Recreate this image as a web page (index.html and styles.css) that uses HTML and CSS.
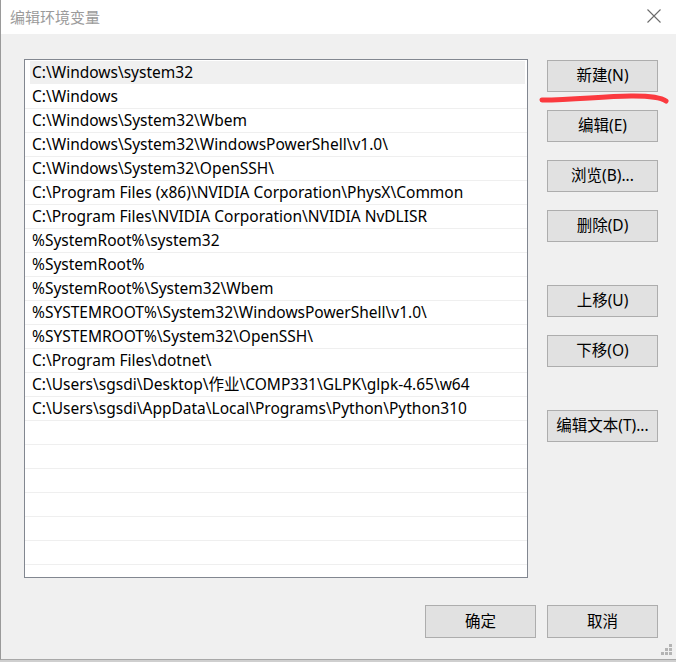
FILE: index.html
```html
<!DOCTYPE html>
<html lang="zh-CN">
<head>
<meta charset="utf-8">
<title>编辑环境变量</title>
<link rel="stylesheet" href="styles.css">
</head>
<body>
<div class="window">
  <div class="titlebar">
    <span class="title">编辑环境变量</span>
    <svg class="close" width="16" height="16" viewBox="0 0 16 16"><path d="M1.5 1.5 L14.5 14.5 M14.5 1.5 L1.5 14.5" stroke="#6b6b6b" stroke-width="1.1" fill="none"/></svg>
  </div>
  <div class="body">
    <div class="main">
      <div class="listbox">
        <div class="row selected"><span>C:\Windows\system32</span></div>
        <div class="row"><span>C:\Windows</span></div>
        <div class="row"><span>C:\Windows\System32\Wbem</span></div>
        <div class="row"><span>C:\Windows\System32\WindowsPowerShell\v1.0\</span></div>
        <div class="row"><span>C:\Windows\System32\OpenSSH\</span></div>
        <div class="row"><span>C:\Program Files (x86)\NVIDIA Corporation\PhysX\Common</span></div>
        <div class="row"><span>C:\Program Files\NVIDIA Corporation\NVIDIA NvDLISR</span></div>
        <div class="row"><span>%SystemRoot%\system32</span></div>
        <div class="row"><span>%SystemRoot%</span></div>
        <div class="row"><span>%SystemRoot%\System32\Wbem</span></div>
        <div class="row"><span>%SYSTEMROOT%\System32\WindowsPowerShell\v1.0\</span></div>
        <div class="row"><span>%SYSTEMROOT%\System32\OpenSSH\</span></div>
        <div class="row"><span>C:\Program Files\dotnet\</span></div>
        <div class="row"><span>C:\Users\sgsdi\Desktop\作业\COMP331\GLPK\glpk-4.65\w64</span></div>
        <div class="row"><span>C:\Users\sgsdi\AppData\Local\Programs\Python\Python310</span></div>
        <div class="row"></div>
        <div class="row"></div>
        <div class="row"></div>
        <div class="row"></div>
        <div class="row"></div>
        <div class="row"></div>
      </div>
      <div class="side">
        <div class="group">
          <button class="btn">新建(N)</button>
          <button class="btn">编辑(E)</button>
          <button class="btn">浏览(B)...</button>
          <button class="btn">删除(D)</button>
        </div>
        <div class="group">
          <button class="btn">上移(U)</button>
          <button class="btn">下移(O)</button>
        </div>
        <div class="group">
          <button class="btn">编辑文本(T)...</button>
        </div>
      </div>
    </div>
    <div class="footer">
      <button class="btn">确定</button>
      <button class="btn">取消</button>
    </div>
  </div>
  <svg class="mark" width="676" height="120" viewBox="0 0 676 120"><path d="M541 100 C575 99.5 600 96.5 630 96 C650 95.8 660 97.5 665 101" stroke="#fb3a3f" stroke-width="5" stroke-linecap="round" fill="none"/></svg>
  <svg class="grip" width="14" height="14" viewBox="0 0 14 14" fill="#b4b4b4"><rect x="9" y="1" width="3" height="3"/><rect x="5" y="5" width="3" height="3"/><rect x="9" y="5" width="3" height="3"/><rect x="1" y="9" width="3" height="3"/><rect x="5" y="9" width="3" height="3"/><rect x="9" y="9" width="3" height="3"/></svg>
</div>
</body>
</html>
```

FILE: styles.css
```css
html, body {
  margin: 0;
  padding: 0;
}
body {
  width: 676px;
  height: 662px;
  background: #cfcfcf;
  overflow: hidden;
  font-family: "Noto Sans", "Noto Sans CJK SC", sans-serif;
  font-size: 15px;
}
.window {
  position: relative;
  box-sizing: border-box;
  width: 676px;
  height: 660px;
  border-left: 1px solid #9a9a9a;
  border-bottom: 1px solid #a8a8a8;
  display: flex;
  flex-direction: column;
}
.titlebar {
  height: 34px;
  background: #ffffff;
  display: flex;
  align-items: center;
  justify-content: space-between;
  padding: 0 14px 0 9px;
}
.title {
  color: #9b9b9b;
  font-family: "Noto Sans CJK SC", sans-serif;
  font-size: 15px;
  line-height: 1;
  margin-top: -2px;
}
.close {
  margin-top: -2px;
}
.body {
  flex: 1;
  background: #f0f0f0;
  padding: 25px 18px 0 23px;
  display: flex;
  flex-direction: column;
}
.main {
  display: flex;
  gap: 19px;
}
.listbox {
  box-sizing: border-box;
  width: 504px;
  height: 519px;
  border: 1px solid #828790;
  background: #ffffff;
  padding-top: 1px;
  overflow: hidden;
  font-size: 15.5px;
}
.row {
  box-sizing: border-box;
  height: 24px;
  border-bottom: 1px solid #efefef;
  display: flex;
  align-items: center;
  padding: 1px 0 0 7px;
  color: #000;
  white-space: nowrap;
  line-height: 1;
}
.row.selected {
  background: #f0f0f0;
  margin-left: 5px;
  margin-right: 2px;
  padding-left: 2px;
  border-bottom-color: #ffffff;
}
.side {
  display: flex;
  flex-direction: column;
  gap: 43px;
  padding-top: 1px;
}
.group {
  display: flex;
  flex-direction: column;
  gap: 18px;
}
.btn {
  box-sizing: border-box;
  width: 111px;
  height: 32px;
  margin: 0;
  padding: 0;
  border: 1px solid #adadad;
  background: #e1e1e1;
  color: #000;
  font-family: "Noto Sans", "Noto Sans CJK SC", sans-serif;
  font-size: 15.5px;
  line-height: 1;
}
.footer {
  display: flex;
  justify-content: flex-end;
  gap: 11px;
  margin-top: 27px;
}
.footer .btn {
  height: 33px;
}
.mark {
  position: absolute;
  left: 0;
  top: 0;
  pointer-events: none;
}
.grip {
  position: absolute;
  right: 2px;
  bottom: 2px;
}
```
